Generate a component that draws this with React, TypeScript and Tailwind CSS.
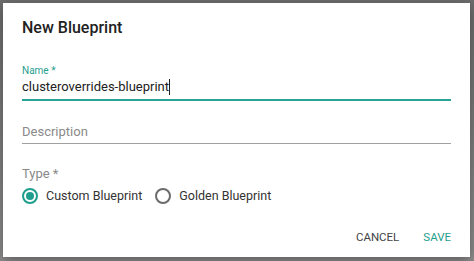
import React from "react";

const TEAL = "text-[#1f9e8e]";

function Radio({ checked, label }: { checked: boolean; label: string }) {
  return (
    <label className="flex items-center gap-[8px]">
      <span
        className={`flex h-[16px] w-[16px] items-center justify-center rounded-full border-[2px] ${
          checked ? "border-[#1f9e8e]" : "border-[#6b6b6b]"
        }`}
      >
        {checked && <span className="h-[8px] w-[8px] rounded-full bg-[#1f9e8e]" />}
      </span>
      <span className="text-[12.5px] leading-[16px] text-[#333]">{label}</span>
    </label>
  );
}

export default function App() {
  return (
    <div className="h-[261px] w-[474px] bg-gradient-to-b from-[#6c6c6c] to-[#8e8e8e] pl-[3px] pt-[3px] font-['Roboto',sans-serif]">
      <div className="flex h-[254px] w-[467px] flex-col bg-white px-[19px] shadow-[0_4px_12px_rgba(0,0,0,0.35)]">
        <h2 className="pt-[16px] text-[16px] font-medium leading-[18px] text-[#212121]">
          New Blueprint
        </h2>

        {/* Name */}
        <div className="mt-[28px] w-[429px]">
          <div className={`text-[10px] leading-[12px] ${TEAL}`}>Name *</div>
          <div className="flex items-center border-b-[2px] border-[#27a495] pb-[3px] pt-[1px]">
            <span className="text-[13px] leading-[18px] text-[#212121]">
              clusteroverrides-blueprint
            </span>
            <span className="h-[16px] w-[1px] bg-[#212121]" />
          </div>
        </div>

        {/* Description */}
        <div className="mt-[22px] w-[429px] border-b border-[#a0a0a0] pb-[3px] text-[13px] leading-[17px] text-[#8a8a8a]">
          Description
        </div>

        {/* Type */}
        <div className="mt-[22px] text-[13px] leading-[15px] text-[#8a8a8a]">Type *</div>
        <div className="mt-[7px] flex items-center gap-[13px]">
          <Radio checked label="Custom Blueprint" />
          <Radio checked={false} label="Golden Blueprint" />
        </div>

        <div className="mt-auto flex justify-end gap-[24px] pb-[13px]">
          <button className="text-[11.5px] leading-[14px] uppercase text-[#444]">
            Cancel
          </button>
          <button className={`text-[11.5px] leading-[14px] uppercase ${TEAL}`}>
            Save
          </button>
        </div>
      </div>
    </div>
  );
}
